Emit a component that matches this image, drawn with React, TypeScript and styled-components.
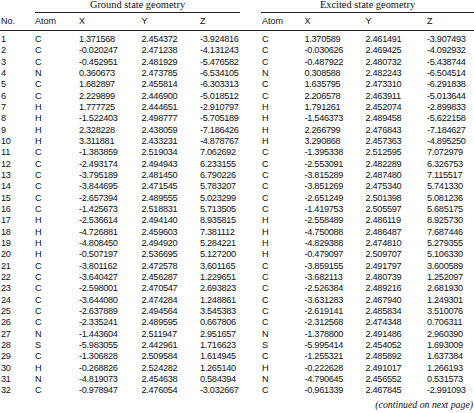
import React from "react";
import styled, { createGlobalStyle } from "styled-components";

const Global = createGlobalStyle`
  html, body { margin: 0; padding: 0; background: #ffffff; }
  body { width: 474px; height: 413px; overflow: hidden; }
`;

const COLS = "34px 44px 62.5px 58.5px 62px 42.5px 61px 61.5px 1fr";

const Page = styled.div`
  width: 474px;
  height: 413px;
  overflow: hidden;
  background: #fff;
  color: #111010;
  font-family: "Liberation Sans", Arial, sans-serif;
  display: flex;
  flex-direction: column;
`;

const GridRow = styled.div`
  display: grid;
  grid-template-columns: ${COLS};
  padding-left: 1px;
`;

const SpannerRow = styled(GridRow)`
  height: 13px;
`;

const Spanner = styled.div<{ $col: string; $ml?: number; $mr?: number }>`
  grid-column: ${(p) => p.$col};
  margin-left: ${(p) => p.$ml ?? 0}px;
  margin-right: ${(p) => p.$mr ?? 0}px;
  border-bottom: 1px solid #222;
  font-family: "Liberation Serif", "Times New Roman", serif;
  font-size: 10.4px;
  line-height: 10px;
  padding-bottom: 2px;
  text-align: center;
  white-space: nowrap;
`;

const HeadRow = styled(GridRow)`
  height: 17px;
  align-items: center;
  border-bottom: 1px solid #222;
`;

const HeadCell = styled.div`
  font-size: 9px;
  line-height: 11px;
  white-space: nowrap;
`;

const Body = styled.div`
  padding-top: 3px;
  display: flex;
  flex-direction: column;
`;

const DataRow = styled(GridRow)`
  height: 11.33px;
  align-items: center;
`;

const Cell = styled.div`
  font-size: 9.2px;
  line-height: 11px;
  letter-spacing: -0.3px;
  white-space: nowrap;
`;

const Note = styled.div`
  margin-top: 2px;
  font-family: "Liberation Serif", "Times New Roman", serif;
  font-style: italic;
  font-size: 9.8px;
  line-height: 12px;
  text-align: right;
  padding-right: 1px;
  white-space: nowrap;
`;

type Atom = [string, string, string, string];

const ground: Atom[] = [
  ["C", "1.371568", "2.454372", "-3.924816"],
  ["C", "-0.020247", "2.471238", "-4.131243"],
  ["C", "-0.452951", "2.481929", "-5.476582"],
  ["N", "0.360673", "2.473785", "-6.534105"],
  ["C", "1.682897", "2.455814", "-6.303313"],
  ["C", "2.229899", "2.446900", "-5.018512"],
  ["H", "1.777725", "2.444651", "-2.910797"],
  ["H", "-1.522403", "2.498777", "-5.705189"],
  ["H", "2.328228", "2.438059", "-7.186426"],
  ["H", "3.311881", "2.433231", "-4.878767"],
  ["C", "-1.383859", "2.519034", "7.062692"],
  ["C", "-2.493174", "2.494943", "6.233155"],
  ["C", "-3.795189", "2.481450", "6.790226"],
  ["C", "-3.844695", "2.471545", "5.783207"],
  ["C", "-2.657394", "2.489555", "5.023299"],
  ["C", "-1.425673", "2.518831", "5.713505"],
  ["H", "-2.536614", "2.494140", "8.935815"],
  ["H", "-4.726881", "2.459603", "7.381112"],
  ["H", "-4.808450", "2.494920", "5.284221"],
  ["H", "-0.507197", "2.536695", "5.127200"],
  ["C", "-3.801162", "2.472578", "3.601165"],
  ["C", "-3.640427", "2.456287", "1.229651"],
  ["C", "-2.598001", "2.470547", "2.693823"],
  ["C", "-3.644080", "2.474284", "1.248861"],
  ["C", "-2.637889", "2.494564", "3.545383"],
  ["C", "-2.335241", "2.489595", "0.667806"],
  ["N", "-1.443604", "2.511947", "2.951657"],
  ["S", "-5.983055", "2.442961", "1.716623"],
  ["C", "-1.306828", "2.509584", "1.614945"],
  ["H", "-0.268826", "2.524282", "1.265140"],
  ["N", "-4.819073", "2.454638", "0.584394"],
  ["C", "-0.978947", "2.476054", "-3.032667"],
];

const excited: Atom[] = [
  ["C", "1.370589", "2.461491", "-3.907493"],
  ["C", "-0.030626", "2.469425", "-4.092932"],
  ["C", "-0.487922", "2.480732", "-5.438744"],
  ["N", "0.308588", "2.482243", "-6.504514"],
  ["C", "1.635795", "2.473310", "-6.291838"],
  ["C", "2.206578", "2.463911", "-5.013644"],
  ["H", "1.791261", "2.452074", "-2.899833"],
  ["H", "-1.546373", "2.489458", "-5.622158"],
  ["H", "2.266799", "2.476843", "-7.184627"],
  ["H", "3.290868", "2.457363", "-4.895250"],
  ["C", "-1.395338", "2.512595", "7.072979"],
  ["C", "-2.553091", "2.482289", "6.326753"],
  ["C", "-3.815289", "2.487480", "7.115517"],
  ["C", "-3.851269", "2.475340", "5.741330"],
  ["C", "-2.651249", "2.501398", "5.081236"],
  ["C", "-1.419753", "2.505597", "5.685175"],
  ["H", "-2.558489", "2.486119", "8.925730"],
  ["H", "-4.750088", "2.486487", "7.687446"],
  ["H", "-4.829388", "2.474810", "5.279355"],
  ["H", "-0.479097", "2.509707", "5.106330"],
  ["C", "-3.859155", "2.491797", "3.600589"],
  ["C", "-3.682113", "2.480739", "1.252097"],
  ["C", "-2.526384", "2.489216", "2.681930"],
  ["C", "-3.631283", "2.467940", "1.249301"],
  ["C", "-2.619141", "2.485834", "3.510076"],
  ["C", "-2.312568", "2.474348", "0.706311"],
  ["N", "-1.378800", "2.491486", "2.960390"],
  ["S", "-5.995414", "2.454052", "1.693009"],
  ["C", "-1.255321", "2.485892", "1.637384"],
  ["H", "-0.222628", "2.491017", "1.266193"],
  ["N", "-4.790645", "2.456552", "0.531573"],
  ["C", "-0.961339", "2.467845", "-2.991093"],
];

const headers = ["No.", "Atom", "X", "Y", "Z", "Atom", "X", "Y", "Z"];

export default function App() {
  return (
    <>
      <Global />
      <Page>
        <SpannerRow>
          <Spanner $col="2 / 6" $mr={22}>Ground state geometry</Spanner>
          <Spanner $col="6 / 10" $ml={-1}>Excited state geometry</Spanner>
        </SpannerRow>
        <HeadRow>
          {headers.map((h, i) => (
            <HeadCell key={i}>{h}</HeadCell>
          ))}
        </HeadRow>
        <Body>
          {ground.map((g, i) => {
            const e = excited[i];
            return (
              <DataRow key={i}>
                <Cell>{i + 1}</Cell>
                {g.map((v, j) => (
                  <Cell key={"g" + j}>{v}</Cell>
                ))}
                {e.map((v, j) => (
                  <Cell key={"e" + j}>{v}</Cell>
                ))}
              </DataRow>
            );
          })}
        </Body>
        <Note>(continued on next page)</Note>
      </Page>
    </>
  );
}
